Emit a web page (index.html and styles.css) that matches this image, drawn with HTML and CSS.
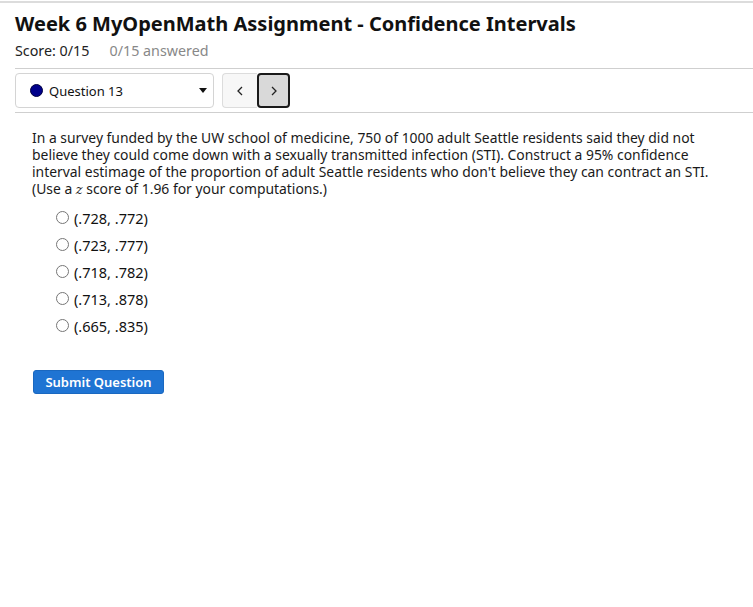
FILE: index.html
```html
<!DOCTYPE html>
<html>
<head>
<meta charset="utf-8">
<link rel="stylesheet" href="styles.css">
</head>
<body>
<div class="topbar"></div>
<div class="main">
  <h1 class="title">Week 6 MyOpenMath Assignment - Confidence Intervals</h1>
  <div class="scoreline"><span class="score">Score: 0/15</span><span class="answered">0/15 answered</span></div>
  <div class="navrow">
    <div class="qselect">
      <span class="dot"></span>
      <span class="qlabel">Question 13</span>
      <span class="caret"></span>
    </div>
    <div class="btngroup">
      <button class="navbtn prev" aria-label="Previous"><svg width="8" height="10" viewBox="0 0 8 10"><path d="M6 1 L2 5 L6 9" fill="none" stroke="#222" stroke-width="1.3"/></svg></button>
      <button class="navbtn next" aria-label="Next"><svg width="8" height="10" viewBox="0 0 8 10"><path d="M2 1 L6 5 L2 9" fill="none" stroke="#222" stroke-width="1.3"/></svg></button>
    </div>
  </div>
  <div class="question">
    <p class="qtext">In a survey funded by the UW school of medicine, 750 of 1000 adult Seattle residents said they did not believe they could come down with a sexually transmitted infection (STI). Construct a 95% confidence interval estimage of the proportion of adult Seattle residents who don't believe they can contract an STI. (Use a <span class="mathz">z</span> score of 1.96 for your computations.)</p>
    <ul class="choices">
      <li class="choice"><input type="radio" name="q"><span>(.728, .772)</span></li>
      <li class="choice"><input type="radio" name="q"><span>(.723, .777)</span></li>
      <li class="choice"><input type="radio" name="q"><span>(.718, .782)</span></li>
      <li class="choice"><input type="radio" name="q"><span>(.713, .878)</span></li>
      <li class="choice"><input type="radio" name="q"><span>(.665, .835)</span></li>
    </ul>
    <button class="submit">Submit Question</button>
  </div>
</div>
</body>
</html>
```
FILE: styles.css
```css
html, body {
  margin: 0;
  padding: 0;
  background: #fff;
}
body {
  font-family: "Noto Sans", "Open Sans", sans-serif;
  color: #1a1a1a;
}
.topbar {
  height: 2px;
  margin-top: 1px;
  background: #dcdcdc;
}
.main {
  margin-left: 15px;
}
.title {
  margin: 7px 0 0 0;
  font-size: 20px;
  line-height: 27px;
  font-weight: 700;
  color: #111;
}
.scoreline {
  margin-top: 5px;
  font-size: 14.3px;
  line-height: 18px;
  color: #222;
}
.answered {
  margin-left: 20px;
  color: #888;
}
.navrow {
  margin-top: 8px;
  border-top: 1px solid #cfcfcf;
  border-bottom: 1px solid #cfcfcf;
  padding: 4px 0 4px 0;
  display: flex;
  align-items: stretch;
  gap: 8px;
}
.qselect {
  width: 197px;
  height: 33px;
  border: 1px solid #d4d4d4;
  border-radius: 4px;
  display: flex;
  align-items: center;
  box-sizing: content-box;
}
.dot {
  width: 11px;
  height: 11px;
  border-radius: 50%;
  background: #00008b;
  border: 0.5px solid #000040;
  margin-left: 14px;
  margin-right: 6px;
}
.qlabel {
  font-size: 13px;
  color: #111;
  flex: 1;
}
.caret {
  width: 0;
  height: 0;
  border-left: 4.5px solid transparent;
  border-right: 4.5px solid transparent;
  border-top: 5px solid #111;
  margin-right: 6px;
}
.btngroup {
  display: flex;
  align-items: stretch;
}
.navbtn {
  display: flex;
  align-items: center;
  justify-content: center;
  padding: 0;
  margin: 0;
  box-sizing: border-box;
  height: 35px;
}
.prev {
  width: 35px;
  background: #f7f7f7;
  border: 1px solid #dcdcdc;
  border-right: none;
  border-radius: 4px 0 0 4px;
}
.next {
  width: 33px;
  background: #d9d9d9;
  border: 2px solid #1a1a1a;
  border-radius: 4px;
}
.question {
  padding: 16px 0 0 17px;
  width: 700px;
}
.qtext {
  margin: 0;
  font-size: 13.9px;
  line-height: 17px;
  color: #1a1a1a;
}
.mathz {
  font-family: "DejaVu Serif", "Liberation Serif", serif;
  font-style: italic;
  font-size: 13px;
  line-height: 1;
}
.choices {
  list-style: none;
  margin: 7px 0 0 0;
  padding: 0 0 0 19px;
}
.choice {
  display: flex;
  align-items: center;
  height: 27px;
  font-size: 14.5px;
  color: #111;
}
.choice input {
  width: 13px;
  height: 13px;
  margin: 0 5px 0 5px;
}
.submit {
  margin: 31px 0 0 1px;
  width: 131px;
  height: 24px;
  padding: 0;
  background: #1f74d3;
  color: #fff;
  border: 1px solid #1a68c0;
  border-radius: 3px;
  font-family: "Noto Sans", "Open Sans", sans-serif;
  font-size: 13px;
  font-weight: 600;
}
```
